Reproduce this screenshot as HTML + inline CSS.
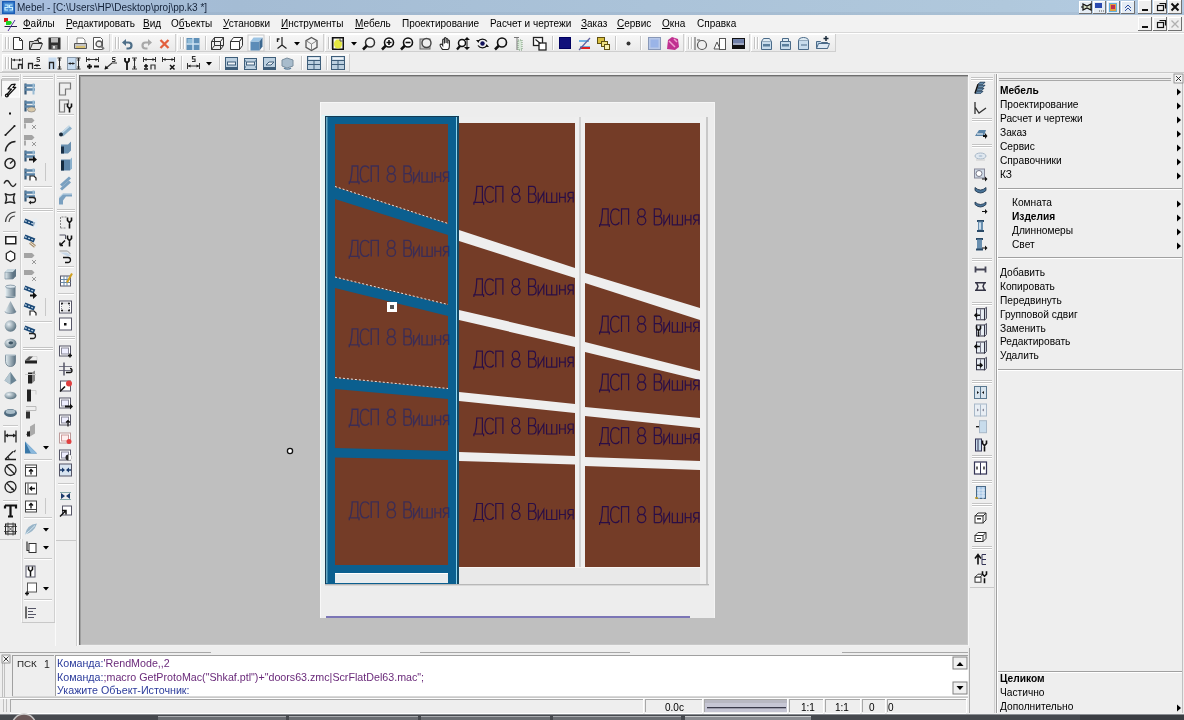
<!DOCTYPE html><html><head><meta charset="utf-8"><style>
*{box-sizing:border-box}
html,body{margin:0;padding:0}
body{width:1184px;height:720px;overflow:hidden;position:relative;background:#f0f0f0;font-family:"Liberation Sans",sans-serif;font-size:10px;color:#000}
.a{position:absolute}
.t{position:absolute;white-space:nowrap;line-height:12px;will-change:transform}
</style></head><body>
<svg class="a" style="left:0;top:0" width="1184" height="720"><defs><linearGradient id="tg" x1="0" y1="0" x2="1" y2="0"><stop offset="0" stop-color="#a8bede"/><stop offset="0.2" stop-color="#a4bcd4"/><stop offset="0.55" stop-color="#abc3d9"/><stop offset="0.85" stop-color="#b0c8dc"/><stop offset="1" stop-color="#b4cce4"/></linearGradient><linearGradient id="tbg" x1="0" y1="0" x2="0" y2="1"><stop offset="0" stop-color="#f7f7f7"/><stop offset="1" stop-color="#e9e9e9"/></linearGradient></defs><rect x="0" y="0" width="1184" height="15" fill="url(#tg)" /><rect x="0" y="12" width="1184" height="3" fill="#8a9cb0" opacity="0.18"/><rect x="0" y="15" width="1184" height="18" fill="#f2f2f2" /><rect x="0" y="32" width="1184" height="1" fill="#d8d8d8"/><rect x="0" y="33" width="1184" height="40" fill="#eeeeee" /><rect x="0" y="33" width="1184" height="1" fill="#ffffff"/><rect x="0" y="72" width="1184" height="1" fill="#c8c8c8"/><rect x="0" y="73" width="1184" height="1" fill="#f4f4f4"/><rect x="2" y="34" width="108" height="18" fill="url(#tbg)" /><rect x="2" y="34" width="108" height="1" fill="#ffffff"/><rect x="2" y="34" width="1" height="18" fill="#ffffff"/><rect x="2" y="51" width="108" height="1" fill="#cfcfcf"/><rect x="109" y="34" width="1" height="18" fill="#cfcfcf"/><rect x="5" y="37" width="1" height="12" fill="#c4c4c4"/><rect x="6" y="37" width="1" height="12" fill="#ffffff"/><rect x="8" y="37" width="1" height="12" fill="#c4c4c4"/><rect x="9" y="37" width="1" height="12" fill="#ffffff"/><rect x="112" y="34" width="64" height="18" fill="url(#tbg)" /><rect x="112" y="34" width="64" height="1" fill="#ffffff"/><rect x="112" y="34" width="1" height="18" fill="#ffffff"/><rect x="112" y="51" width="64" height="1" fill="#cfcfcf"/><rect x="175" y="34" width="1" height="18" fill="#cfcfcf"/><rect x="115" y="37" width="1" height="12" fill="#c4c4c4"/><rect x="116" y="37" width="1" height="12" fill="#ffffff"/><rect x="118" y="37" width="1" height="12" fill="#c4c4c4"/><rect x="119" y="37" width="1" height="12" fill="#ffffff"/><rect x="177" y="34" width="147" height="18" fill="url(#tbg)" /><rect x="177" y="34" width="147" height="1" fill="#ffffff"/><rect x="177" y="34" width="1" height="18" fill="#ffffff"/><rect x="177" y="51" width="147" height="1" fill="#cfcfcf"/><rect x="323" y="34" width="1" height="18" fill="#cfcfcf"/><rect x="180" y="37" width="1" height="12" fill="#c4c4c4"/><rect x="181" y="37" width="1" height="12" fill="#ffffff"/><rect x="183" y="37" width="1" height="12" fill="#c4c4c4"/><rect x="184" y="37" width="1" height="12" fill="#ffffff"/><rect x="325" y="34" width="359" height="18" fill="url(#tbg)" /><rect x="325" y="34" width="359" height="1" fill="#ffffff"/><rect x="325" y="34" width="1" height="18" fill="#ffffff"/><rect x="325" y="51" width="359" height="1" fill="#cfcfcf"/><rect x="683" y="34" width="1" height="18" fill="#cfcfcf"/><rect x="328" y="37" width="1" height="12" fill="#c4c4c4"/><rect x="329" y="37" width="1" height="12" fill="#ffffff"/><rect x="331" y="37" width="1" height="12" fill="#c4c4c4"/><rect x="332" y="37" width="1" height="12" fill="#ffffff"/><rect x="685" y="34" width="65" height="18" fill="url(#tbg)" /><rect x="685" y="34" width="65" height="1" fill="#ffffff"/><rect x="685" y="34" width="1" height="18" fill="#ffffff"/><rect x="685" y="51" width="65" height="1" fill="#cfcfcf"/><rect x="749" y="34" width="1" height="18" fill="#cfcfcf"/><rect x="688" y="37" width="1" height="12" fill="#c4c4c4"/><rect x="689" y="37" width="1" height="12" fill="#ffffff"/><rect x="691" y="37" width="1" height="12" fill="#c4c4c4"/><rect x="692" y="37" width="1" height="12" fill="#ffffff"/><rect x="751" y="34" width="85" height="18" fill="url(#tbg)" /><rect x="751" y="34" width="85" height="1" fill="#ffffff"/><rect x="751" y="34" width="1" height="18" fill="#ffffff"/><rect x="751" y="51" width="85" height="1" fill="#cfcfcf"/><rect x="835" y="34" width="1" height="18" fill="#cfcfcf"/><rect x="754" y="37" width="1" height="12" fill="#c4c4c4"/><rect x="755" y="37" width="1" height="12" fill="#ffffff"/><rect x="757" y="37" width="1" height="12" fill="#c4c4c4"/><rect x="758" y="37" width="1" height="12" fill="#ffffff"/><rect x="2" y="54" width="348" height="18" fill="url(#tbg)" /><rect x="2" y="54" width="348" height="1" fill="#ffffff"/><rect x="2" y="54" width="1" height="18" fill="#ffffff"/><rect x="2" y="71" width="348" height="1" fill="#cfcfcf"/><rect x="349" y="54" width="1" height="18" fill="#cfcfcf"/><rect x="5" y="57" width="1" height="12" fill="#c4c4c4"/><rect x="6" y="57" width="1" height="12" fill="#ffffff"/><rect x="8" y="57" width="1" height="12" fill="#c4c4c4"/><rect x="9" y="57" width="1" height="12" fill="#ffffff"/><rect x="67" y="36" width="1" height="14" fill="#c8c8c8"/><rect x="68" y="36" width="1" height="14" fill="#ffffff"/><rect x="205" y="36" width="1" height="14" fill="#c8c8c8"/><rect x="206" y="36" width="1" height="14" fill="#ffffff"/><rect x="269" y="36" width="1" height="14" fill="#c8c8c8"/><rect x="270" y="36" width="1" height="14" fill="#ffffff"/><rect x="552" y="36" width="1" height="14" fill="#c8c8c8"/><rect x="553" y="36" width="1" height="14" fill="#ffffff"/><rect x="615" y="36" width="1" height="14" fill="#c8c8c8"/><rect x="616" y="36" width="1" height="14" fill="#ffffff"/><rect x="640" y="36" width="1" height="14" fill="#c8c8c8"/><rect x="641" y="36" width="1" height="14" fill="#ffffff"/><rect x="181" y="56" width="1" height="14" fill="#c8c8c8"/><rect x="182" y="56" width="1" height="14" fill="#ffffff"/><rect x="219" y="56" width="1" height="14" fill="#c8c8c8"/><rect x="220" y="56" width="1" height="14" fill="#ffffff"/><rect x="301" y="56" width="1" height="14" fill="#c8c8c8"/><rect x="302" y="56" width="1" height="14" fill="#ffffff"/><rect x="326" y="56" width="1" height="14" fill="#c8c8c8"/><rect x="327" y="56" width="1" height="14" fill="#ffffff"/><rect x="0" y="74" width="78" height="574" fill="#eeeeee" /><rect x="20" y="74" width="1" height="465" fill="#d0d0d0"/><rect x="21" y="74" width="1" height="548" fill="#fafafa"/><rect x="22" y="539" width="1" height="83" fill="#d8d8d8"/><rect x="54" y="74" width="1" height="548" fill="#d0d0d0"/><rect x="55" y="74" width="1" height="574" fill="#fafafa"/><rect x="76" y="74" width="1" height="574" fill="#d0d0d0"/><rect x="77" y="74" width="1" height="574" fill="#fafafa"/><rect x="0" y="647" width="78" height="1" fill="#d0d0d0"/><rect x="2" y="76" width="17" height="1" fill="#c4c4c4"/><rect x="2" y="77" width="17" height="1" fill="#ffffff"/><rect x="2" y="78" width="17" height="1" fill="#c4c4c4"/><rect x="2" y="79" width="17" height="1" fill="#ffffff"/><rect x="23" y="76" width="30" height="1" fill="#c4c4c4"/><rect x="23" y="77" width="30" height="1" fill="#ffffff"/><rect x="23" y="78" width="30" height="1" fill="#c4c4c4"/><rect x="23" y="79" width="30" height="1" fill="#ffffff"/><rect x="57" y="76" width="18" height="1" fill="#c4c4c4"/><rect x="57" y="77" width="18" height="1" fill="#ffffff"/><rect x="57" y="78" width="18" height="1" fill="#c4c4c4"/><rect x="57" y="79" width="18" height="1" fill="#ffffff"/><rect x="3" y="231" width="15" height="1" fill="#c8c8c8"/><rect x="3" y="232" width="15" height="1" fill="#ffffff"/><rect x="3" y="425" width="15" height="1" fill="#c8c8c8"/><rect x="3" y="426" width="15" height="1" fill="#ffffff"/><rect x="3" y="500" width="15" height="1" fill="#c8c8c8"/><rect x="3" y="501" width="15" height="1" fill="#ffffff"/><rect x="0" y="539" width="20" height="1" fill="#c8c8c8"/><rect x="24" y="186" width="28" height="1" fill="#c8c8c8"/><rect x="24" y="187" width="28" height="1" fill="#ffffff"/><rect x="24" y="321" width="28" height="1" fill="#c8c8c8"/><rect x="24" y="322" width="28" height="1" fill="#ffffff"/><rect x="24" y="459" width="28" height="1" fill="#c8c8c8"/><rect x="24" y="460" width="28" height="1" fill="#ffffff"/><rect x="24" y="517" width="28" height="1" fill="#c8c8c8"/><rect x="24" y="518" width="28" height="1" fill="#ffffff"/><rect x="24" y="558" width="28" height="1" fill="#c8c8c8"/><rect x="24" y="559" width="28" height="1" fill="#ffffff"/><rect x="24" y="599" width="28" height="1" fill="#c8c8c8"/><rect x="24" y="600" width="28" height="1" fill="#ffffff"/><rect x="23" y="208" width="30" height="1" fill="#c4c4c4"/><rect x="23" y="209" width="30" height="1" fill="#ffffff"/><rect x="23" y="210" width="30" height="1" fill="#c4c4c4"/><rect x="23" y="211" width="30" height="1" fill="#ffffff"/><rect x="23" y="347" width="30" height="1" fill="#c4c4c4"/><rect x="23" y="348" width="30" height="1" fill="#ffffff"/><rect x="23" y="349" width="30" height="1" fill="#c4c4c4"/><rect x="23" y="350" width="30" height="1" fill="#ffffff"/><rect x="22" y="622" width="33" height="1" fill="#c8c8c8"/><rect x="58" y="114" width="16" height="1" fill="#c8c8c8"/><rect x="58" y="115" width="16" height="1" fill="#ffffff"/><rect x="58" y="266" width="16" height="1" fill="#c8c8c8"/><rect x="58" y="267" width="16" height="1" fill="#ffffff"/><rect x="58" y="293" width="16" height="1" fill="#c8c8c8"/><rect x="58" y="294" width="16" height="1" fill="#ffffff"/><rect x="58" y="483" width="16" height="1" fill="#c8c8c8"/><rect x="58" y="484" width="16" height="1" fill="#ffffff"/><rect x="57" y="209" width="18" height="1" fill="#c4c4c4"/><rect x="57" y="210" width="18" height="1" fill="#ffffff"/><rect x="57" y="211" width="18" height="1" fill="#c4c4c4"/><rect x="57" y="212" width="18" height="1" fill="#ffffff"/><rect x="57" y="336" width="18" height="1" fill="#c4c4c4"/><rect x="57" y="337" width="18" height="1" fill="#ffffff"/><rect x="57" y="338" width="18" height="1" fill="#c4c4c4"/><rect x="57" y="339" width="18" height="1" fill="#ffffff"/><rect x="56" y="540" width="20" height="1" fill="#c8c8c8"/><rect x="79" y="75" width="889" height="570" fill="#6e6e6e" /><rect x="80" y="76" width="888" height="569" fill="#a0a0a0" /><rect x="81" y="77" width="887" height="568" fill="#bfbfbf" /><rect x="967" y="77" width="1" height="568" fill="#c8c8c8"/><rect x="81" y="644" width="887" height="1" fill="#c8c8c8"/><rect x="968" y="74" width="28" height="639" fill="#eeeeee" /><rect x="968" y="74" width="1" height="572" fill="#f8f8f8"/><rect x="971" y="77" width="22" height="1" fill="#c4c4c4"/><rect x="971" y="78" width="22" height="1" fill="#ffffff"/><rect x="971" y="79" width="22" height="1" fill="#c4c4c4"/><rect x="971" y="80" width="22" height="1" fill="#ffffff"/><rect x="972" y="118" width="20" height="1" fill="#c4c4c4"/><rect x="972" y="119" width="20" height="1" fill="#ffffff"/><rect x="972" y="120" width="20" height="1" fill="#c4c4c4"/><rect x="972" y="121" width="20" height="1" fill="#ffffff"/><rect x="972" y="144" width="20" height="1" fill="#c4c4c4"/><rect x="972" y="145" width="20" height="1" fill="#ffffff"/><rect x="972" y="146" width="20" height="1" fill="#c4c4c4"/><rect x="972" y="147" width="20" height="1" fill="#ffffff"/><rect x="972" y="258" width="20" height="1" fill="#c4c4c4"/><rect x="972" y="259" width="20" height="1" fill="#ffffff"/><rect x="972" y="260" width="20" height="1" fill="#c4c4c4"/><rect x="972" y="261" width="20" height="1" fill="#ffffff"/><rect x="972" y="302" width="20" height="1" fill="#c4c4c4"/><rect x="972" y="303" width="20" height="1" fill="#ffffff"/><rect x="972" y="304" width="20" height="1" fill="#c4c4c4"/><rect x="972" y="305" width="20" height="1" fill="#ffffff"/><rect x="972" y="380" width="20" height="1" fill="#c4c4c4"/><rect x="972" y="381" width="20" height="1" fill="#ffffff"/><rect x="972" y="382" width="20" height="1" fill="#c4c4c4"/><rect x="972" y="383" width="20" height="1" fill="#ffffff"/><rect x="972" y="455" width="20" height="1" fill="#c4c4c4"/><rect x="972" y="456" width="20" height="1" fill="#ffffff"/><rect x="972" y="457" width="20" height="1" fill="#c4c4c4"/><rect x="972" y="458" width="20" height="1" fill="#ffffff"/><rect x="972" y="480" width="20" height="1" fill="#c4c4c4"/><rect x="972" y="481" width="20" height="1" fill="#ffffff"/><rect x="972" y="482" width="20" height="1" fill="#c4c4c4"/><rect x="972" y="483" width="20" height="1" fill="#ffffff"/><rect x="972" y="503" width="20" height="1" fill="#c4c4c4"/><rect x="972" y="504" width="20" height="1" fill="#ffffff"/><rect x="972" y="505" width="20" height="1" fill="#c4c4c4"/><rect x="972" y="506" width="20" height="1" fill="#ffffff"/><rect x="972" y="546" width="20" height="1" fill="#c4c4c4"/><rect x="972" y="547" width="20" height="1" fill="#ffffff"/><rect x="972" y="548" width="20" height="1" fill="#c4c4c4"/><rect x="972" y="549" width="20" height="1" fill="#ffffff"/><rect x="970" y="587" width="24" height="1" fill="#c8c8c8"/><rect x="994" y="74" width="1" height="639" fill="#d0d0d0"/><rect x="996" y="74" width="188" height="639" fill="#eeeeee" /><rect x="996" y="74" width="1" height="639" fill="#a0a0a0"/><rect x="997" y="74" width="1" height="639" fill="#ffffff"/><rect x="999" y="78" width="172" height="1" fill="#a8a8a8"/><rect x="999" y="80" width="172" height="1" fill="#a8a8a8"/><rect x="998" y="188" width="184" height="1" fill="#a0a0a0"/><rect x="998" y="189" width="184" height="1" fill="#ffffff"/><rect x="998" y="257" width="184" height="1" fill="#a0a0a0"/><rect x="998" y="258" width="184" height="1" fill="#ffffff"/><rect x="998" y="369" width="184" height="1" fill="#a0a0a0"/><rect x="998" y="370" width="184" height="1" fill="#ffffff"/><rect x="998" y="671" width="184" height="1" fill="#a0a0a0"/><rect x="998" y="672" width="184" height="1" fill="#ffffff"/><rect x="1182" y="74" width="1" height="639" fill="#c0c0c0"/><rect x="0" y="646" width="968" height="68" fill="#eeeeee" /><rect x="0" y="652" width="211" height="1" fill="#a8a8a8"/><rect x="420" y="652" width="210" height="1" fill="#a8a8a8"/><rect x="842" y="652" width="126" height="1" fill="#a8a8a8"/><rect x="969" y="648" width="1" height="65" fill="#a8a8a8"/><rect x="2" y="655" width="1" height="42" fill="#c0c0c0"/><rect x="4" y="655" width="1" height="42" fill="#c0c0c0"/><rect x="12" y="655" width="42" height="41" fill="#eeeeee" /><rect x="12" y="655" width="42" height="1" fill="#a0a0a0"/><rect x="12" y="655" width="1" height="41" fill="#a0a0a0"/><rect x="55" y="655" width="913" height="41" fill="#ffffff" /><rect x="55" y="655" width="913" height="1" fill="#a0a0a0"/><rect x="55" y="655" width="1" height="41" fill="#a0a0a0"/><rect x="12" y="696" width="956" height="1" fill="#d8d8d8"/><rect x="953" y="657" width="14" height="12" fill="#f0f0f0" stroke="#808080" stroke-width="1"/><rect x="953" y="682" width="14" height="12" fill="#f0f0f0" stroke="#808080" stroke-width="1"/><polygon points="956.5,666 963.5,666 960,662" fill="#000"/><polygon points="956.5,686 963.5,686 960,690" fill="#000"/><rect x="0" y="697" width="968" height="1" fill="#c8c8c8"/><rect x="0" y="698" width="968" height="1" fill="#ffffff"/><rect x="3" y="699" width="1" height="13" fill="#c0c0c0"/><rect x="6" y="699" width="1" height="13" fill="#c0c0c0"/><rect x="10" y="699" width="633" height="1" fill="#a8a8a8"/><rect x="10" y="699" width="1" height="13" fill="#a8a8a8"/><rect x="10" y="713" width="633" height="1" fill="#ffffff"/><rect x="643" y="699" width="1" height="14" fill="#ffffff"/><rect x="645" y="699" width="57" height="1" fill="#a8a8a8"/><rect x="645" y="699" width="1" height="13" fill="#a8a8a8"/><rect x="645" y="713" width="57" height="1" fill="#ffffff"/><rect x="702" y="699" width="1" height="14" fill="#ffffff"/><rect x="704" y="699" width="83" height="1" fill="#a8a8a8"/><rect x="704" y="699" width="1" height="13" fill="#a8a8a8"/><rect x="704" y="713" width="83" height="1" fill="#ffffff"/><rect x="787" y="699" width="1" height="14" fill="#ffffff"/><rect x="789" y="699" width="34" height="1" fill="#a8a8a8"/><rect x="789" y="699" width="1" height="13" fill="#a8a8a8"/><rect x="789" y="713" width="34" height="1" fill="#ffffff"/><rect x="823" y="699" width="1" height="14" fill="#ffffff"/><rect x="825" y="699" width="35" height="1" fill="#a8a8a8"/><rect x="825" y="699" width="1" height="13" fill="#a8a8a8"/><rect x="825" y="713" width="35" height="1" fill="#ffffff"/><rect x="860" y="699" width="1" height="14" fill="#ffffff"/><rect x="862" y="699" width="23" height="1" fill="#a8a8a8"/><rect x="862" y="699" width="1" height="13" fill="#a8a8a8"/><rect x="862" y="713" width="23" height="1" fill="#ffffff"/><rect x="885" y="699" width="1" height="14" fill="#ffffff"/><rect x="887" y="699" width="79" height="1" fill="#a8a8a8"/><rect x="887" y="699" width="1" height="13" fill="#a8a8a8"/><rect x="887" y="713" width="79" height="1" fill="#ffffff"/><rect x="966" y="699" width="1" height="14" fill="#ffffff"/><rect x="705" y="700" width="82" height="12" fill="#c6c6d4" /><rect x="705" y="700" width="82" height="3" fill="#b8b8c2" /><rect x="707" y="707" width="79" height="1.3" fill="#3a3a4a" /><rect x="0" y="714" width="1184" height="6" fill="#46494e" /><rect x="0" y="714" width="1184" height="1" fill="#8a8d92"/><circle cx="24" cy="726" r="12" fill="#6a5858" stroke="#c8c8c8" stroke-width="1.5"/><rect x="158" y="716" width="128" height="4" fill="#6a6d72" /><rect x="158" y="716" width="128" height="1" fill="#a8aaae"/><rect x="289" y="716" width="129" height="4" fill="#6a6d72" /><rect x="289" y="716" width="129" height="1" fill="#a8aaae"/><rect x="421" y="716" width="129" height="4" fill="#6a6d72" /><rect x="421" y="716" width="129" height="1" fill="#a8aaae"/><rect x="553" y="716" width="128" height="4" fill="#6a6d72" /><rect x="553" y="716" width="128" height="1" fill="#a8aaae"/><rect x="685" y="716" width="126" height="4" fill="#8a8d92" /><rect x="685" y="716" width="126" height="1" fill="#c8cacc"/><rect x="1080" y="715" width="104" height="5" fill="#3a3d42" /><rect x="2" y="655" width="8" height="8" fill="#f4f4f4" stroke="#808080" stroke-width=".8"/><path d="M3.5 656.5l5 5M8.5 656.5l-5 5" stroke="#222" stroke-width=".9"/><rect x="1174" y="74" width="9" height="9" fill="#f4f4f4" stroke="#808080" stroke-width=".8"/><path d="M1176 76l5 5M1181 76l-5 5" stroke="#222" stroke-width=".9"/></svg>
<svg class="a" style="left:0;top:0" width="1184" height="720" viewBox="0 0 1184 720">
<defs><path id="dsp" d="M0.3 2.3V0H10V2.3M1 0C2.5-4 3-10 3.2-16H8.8V0M20 -13.5C19.3 -15.3 18 -16 16 -16C12.8 -16 11.3 -13 11.3 -8C11.3 -3 12.8 0 16 0C18 0 19.3 -0.7 20 -2.5M22.2 0V-16H29.3V0M45.9 -12A3.6 4 0 1 0 38.7 -12A3.6 4 0 1 0 45.9 -12ZM46.5 -4.2A4.2 4.2 0 1 0 38.1 -4.2A4.2 4.2 0 1 0 46.5 -4.2ZM55 0V-16H59C61 -16 62 -14.8 62 -12.2C62 -9.8 61 -8.4 59 -8.4H55M59 -8.4C61.5 -8.4 62.6 -6.8 62.6 -4.2C62.6 -1.5 61.5 0 59 0H55M64.6 -10V0L70.2 -10V0M73 -10V0H83.2V-10M78.1 -10V0M86 -10V0M91.6 -10V0M86 -5H91.6M99.6 0V-10H96.6C94.9 -10 94.3 -9 94.3 -7.3C94.3 -5.6 94.9 -4.6 96.6 -4.6H99.6M96.8 -4.6L94 0" fill="none"/></defs>
<rect x="320" y="102" width="395" height="516" fill="#ededed" />
<rect x="320" y="102" width="395" height="1" fill="#f6f6f6" />
<rect x="320" y="102" width="1" height="516" fill="#f8f8f8" />
<rect x="714" y="102" width="1" height="516" fill="#f4f4f4" />
<rect x="322" y="115" width="137" height="1" fill="#d8f4fa" />
<rect x="321" y="116" width="4" height="468" fill="#e8f4f4" />
<rect x="325" y="116" width="134" height="468" fill="#0b5f8f" />
<rect x="325" y="116" width="134" height="1" fill="#163a52" />
<rect x="325" y="116" width="1" height="468" fill="#163a52" />
<rect x="326" y="117" width="1.5" height="466" fill="#6aaac4" />
<rect x="456" y="117" width="1" height="467" fill="#8ad4f0" />
<rect x="457" y="117" width="2" height="467" fill="#134a66" />
<rect x="335" y="124" width="113" height="441" fill="#743c27" />
<rect x="335" y="573" width="113" height="10" fill="#e8ecee" />
<rect x="335" y="573" width="113" height="1" fill="#ffffff" />
<rect x="459" y="123" width="116" height="444" fill="#743c27" />
<rect x="585" y="123" width="115" height="444" fill="#743c27" />
<rect x="459" y="117" width="249" height="6" fill="#eeeeee" />
<rect x="575" y="117" width="10" height="468" fill="#efefef" />
<rect x="579" y="117" width="2" height="468" fill="#d2d2d2" />
<rect x="700" y="117" width="8" height="468" fill="#efefef" />
<rect x="706" y="117" width="2" height="468" fill="#c8c8c8" />
<rect x="459" y="567" width="241" height="17" fill="#e9e9e9" />
<rect x="459" y="567" width="241" height="1" fill="#f8f4f2" />
<rect x="325" y="584" width="384" height="1" fill="#b8b8b8" />
<rect x="325" y="585" width="384" height="1" fill="#d8d8d8" />
<rect x="326" y="616" width="364" height="2" fill="#7c76b6" />
<polygon points="459,230 575,268 575,278 459,241" fill="#eeeeee"/>
<polygon points="459,310 575,337 575,347 459,320" fill="#eeeeee"/>
<polygon points="459,392 575,404 575,413 459,401" fill="#eeeeee"/>
<polygon points="459,452 575,456 575,464.5 459,461" fill="#eeeeee"/>
<polygon points="585,273 700,308 700,320 585,283" fill="#eeeeee"/>
<polygon points="585,342 700,371 700,380 585,352" fill="#eeeeee"/>
<polygon points="585,407 700,418 700,428 585,416" fill="#eeeeee"/>
<polygon points="585,457 700,461 700,470 585,466" fill="#eeeeee"/>
<polygon points="335,187 448,224 448,235 335,199" fill="#0b5f8f"/>
<polygon points="335,277.5 448,305 448,316 335,288" fill="#0b5f8f"/>
<polygon points="335,378 448,389 448,399 335,389" fill="#0b5f8f"/>
<polygon points="335,448 448,451 448,460 335,457.5" fill="#0b5f8f"/>
<line x1="335" y1="186.5" x2="448" y2="223.5" stroke="#fff" stroke-width="1" stroke-dasharray="2,2" opacity="0.85"/>
<line x1="335" y1="277.0" x2="448" y2="304.5" stroke="#fff" stroke-width="1" stroke-dasharray="2,2" opacity="0.85"/>
<line x1="335" y1="377.5" x2="448" y2="388.5" stroke="#fff" stroke-width="1" stroke-dasharray="2,2" opacity="0.85"/>
<use href="#dsp" x="349" y="182" stroke="#1a2470" stroke-width="1.4" opacity="0.62"/>
<use href="#dsp" x="349" y="256.4" stroke="#1a2470" stroke-width="1.4" opacity="0.62"/>
<use href="#dsp" x="349" y="344.9" stroke="#1a2470" stroke-width="1.4" opacity="0.62"/>
<use href="#dsp" x="349" y="425.2" stroke="#1a2470" stroke-width="1.4" opacity="0.62"/>
<use href="#dsp" x="349" y="517.9" stroke="#1a2470" stroke-width="1.4" opacity="0.62"/>
<use href="#dsp" x="473.6" y="202.4" stroke="#2a0e46" stroke-width="1.2"/>
<use href="#dsp" x="473.6" y="294.8" stroke="#2a0e46" stroke-width="1.2"/>
<use href="#dsp" x="473.6" y="367.2" stroke="#2a0e46" stroke-width="1.2"/>
<use href="#dsp" x="473.6" y="434" stroke="#2a0e46" stroke-width="1.2"/>
<use href="#dsp" x="473.6" y="519.5" stroke="#2a0e46" stroke-width="1.2"/>
<use href="#dsp" x="599.3" y="224.8" stroke="#2a0e46" stroke-width="1.2"/>
<use href="#dsp" x="599.3" y="332.1" stroke="#2a0e46" stroke-width="1.2"/>
<use href="#dsp" x="599.3" y="390.2" stroke="#2a0e46" stroke-width="1.2"/>
<use href="#dsp" x="599.3" y="443.7" stroke="#2a0e46" stroke-width="1.2"/>
<use href="#dsp" x="599.3" y="522.7" stroke="#2a0e46" stroke-width="1.2"/>
<rect x="387" y="302" width="10" height="10" fill="#fff" />
<rect x="390" y="305" width="4" height="4" fill="#555" />
<circle cx="290" cy="451" r="2.6" fill="#fff" stroke="#111" stroke-width="1.3"/>
</svg>
<svg class="a" style="left:0;top:0" width="1184" height="720"><defs><linearGradient id="g3d" x1="0" y1="0" x2="1" y2="0"><stop offset="0" stop-color="#e4eef2"/><stop offset="1" stop-color="#5c7282"/></linearGradient><radialGradient id="r3d" cx="0.35" cy="0.35" r="0.7"><stop offset="0" stop-color="#e8f0f4"/><stop offset="1" stop-color="#58707e"/></radialGradient></defs><rect x="248" y="35" width="16" height="16" fill="#fafafa" stroke="#c8c8c8"/><g transform="translate(250,37)"><path d="M.5 4.5h9v9h-9z" fill="#5c8cb8"/><path d="M.5 4.5l3-4h9l-3 4z" fill="#9cc4e4"/><path d="M9.5 4.5l3-4v9l-3 4z" fill="#3c6890"/></g><g transform="translate(11,37)"><path d="M2.5 .5h6l3 3v9h-9z" fill="#fff" stroke="#333"/><path d="M8.5 .5v3h3" fill="none" stroke="#333"/></g><g transform="translate(29,37)"><path d="M.5 4.5h4l1-1h4v2h3l-2.5 7h-9.5z" fill="#c8c8c8" stroke="#333"/><path d="M1 12.5l2.5-6h10l-2.5 6z" fill="#e8e8e8" stroke="#333"/><path d="M8 3q2-3 4-1" fill="none" stroke="#333" stroke-width="1.5"/></g><g transform="translate(48,37)"><rect x=".5" y=".5" width="12" height="12" fill="#2e2e2e"/><rect x="3" y="1" width="7" height="4.5" fill="#bcbcbc"/><rect x="3.5" y="8" width="6" height="4.5" fill="#777"/><rect x="5" y="9" width="2" height="2.5" fill="#ddd"/></g><g transform="translate(74,37)"><path d="M3 1h6l2 2v4h-8z" fill="#fff" stroke="#888"/><path d="M.5 6.5h12v5h-12z" fill="#c4c4c4" stroke="#555"/><rect x="2" y="9" width="9" height="2" fill="#d8c070"/></g><g transform="translate(92,37)"><path d="M1.5 .5h7l2 2v10h-9z" fill="#fff" stroke="#555"/><circle cx="7" cy="7" r="3" fill="#eee" stroke="#555" stroke-width="1.3"/><path d="M9 9l3 3" stroke="#777" stroke-width="2"/></g><g transform="translate(121,37)"><path d="M3.5 5.5h4a3 3 0 0 1 0 6h-2" fill="none" stroke="#4d6e88" stroke-width="2.2"/><path d="M1 5.5l4-3.5v7z" fill="#4d6e88"/></g><g transform="translate(140,37)"><path d="M9.5 5.5h-4a3 3 0 0 0 0 6h2" fill="none" stroke="#a8a8a8" stroke-width="2.2"/><path d="M12 5.5l-4-3.5v7z" fill="#a8a8a8"/></g><g transform="translate(158,37)"><path d="M2.5 3l8 8M10.5 3l-8 8" stroke="#e2603e" stroke-width="2.3"/></g><g transform="translate(186,37)"><rect x=".5" y="1" width="13" height="12" fill="#5f90b8"/><path d="M.5 7h13M7 1v12" stroke="#cfe4f4" stroke-width="1.5"/><rect x="1.5" y="2" width="4.5" height="4" fill="#8fbbd8"/></g><g transform="translate(211,37)"><path d="M.5 4.5h9v8h-9zM.5 4.5l3-4h9l-3 4M12.5 .5v8l-3 4M3.5 .5v8h9M3.5 8.5l-3 4" fill="none" stroke="#333"/></g><g transform="translate(230,37)"><path d="M.5 4.5h9v8h-9z" fill="#fff" stroke="#333"/><path d="M.5 4.5l3-4h9l-3 4z" fill="#fff" stroke="#333"/><path d="M9.5 4.5l3-4v8l-3 4z" fill="#f4f4f4" stroke="#333"/></g><g transform="translate(276,37)"><path d="M6 0v8M6 8l-4.5 3.5M6 8l4.5 3.5" stroke="#222" stroke-width="1.2" fill="none"/><path d="M1.5 5V2h2" stroke="#222" stroke-width="1.4" fill="none"/></g><g transform="translate(305,37)"><path d="M6.5 .5l5.5 3.2v6.6l-5.5 3.2-5.5-3.2v-6.6z" fill="#f2f2f2" stroke="#555" stroke-width="1.3"/><path d="M1.5 4l5 3 5-3M6.5 7v6" fill="none" stroke="#888"/></g><g transform="translate(332,37)"><rect x=".75" y=".75" width="10.5" height="11.5" fill="#f8f8f0" stroke="#111" stroke-width="1.5"/><ellipse cx="6" cy="7" rx="4" ry="4.5" fill="#e4e840"/><path d="M8 1v3h3" fill="none" stroke="#555"/></g><g transform="translate(362,37)"><circle cx="8" cy="5.5" r="4.5" fill="#f4f4f4" stroke="#333" stroke-width="1.5"/><path d="M5 8.5l-4 4" stroke="#111" stroke-width="2.5"/></g><g transform="translate(381,37)"><circle cx="8" cy="5.5" r="4.5" fill="#fff" stroke="#111" stroke-width="1.6"/><path d="M8 3v5M5.5 5.5h5" stroke="#111" stroke-width="1.6"/><path d="M5 8.5l-4 4" stroke="#111" stroke-width="2.5"/></g><g transform="translate(400,37)"><circle cx="8" cy="5.5" r="4.5" fill="#fff" stroke="#111" stroke-width="1.6"/><path d="M5.5 5.5h5" stroke="#111" stroke-width="1.6"/><path d="M5 8.5l-4 4" stroke="#111" stroke-width="2.5"/></g><g transform="translate(419,37)"><rect x="1" y="2" width="10" height="10" fill="#ccc" stroke="#666"/><circle cx="7.5" cy="6" r="4.5" fill="#eee" stroke="#444" stroke-width="1.4"/></g><g transform="translate(439,37)"><path d="M3.5 12.5c-1.5-2-3.2-4-2.2-5 .8-.8 1.8 0 2.4 1V3c0-1.3 1.7-1.3 1.7 0v3.5V1.5c0-1.3 1.7-1.3 1.7 0V6V2.5c0-1.3 1.7-1.3 1.7 0V6.5V4c0-1.3 1.6-1.3 1.6 0v4.5c0 2.5-1 4-2 4z" fill="#fff" stroke="#222" stroke-width="1.1"/></g><g transform="translate(457,37)"><circle cx="5" cy="6" r="3.5" fill="#fff" stroke="#111" stroke-width="1.5"/><path d="M3 9l-3 3.5" stroke="#111" stroke-width="2.3"/><path d="M10 0l3 3h-6zM10 13l3-3h-6z" fill="#111"/><path d="M10 3v7" stroke="#111"/></g><g transform="translate(476,37)"><circle cx="6.5" cy="6.5" r="2.2" fill="#10105a"/><path d="M2 4.5A5.5 5.5 0 0 1 11 4.5M11 8.5A5.5 5.5 0 0 1 2 8.5" fill="none" stroke="#111" stroke-width="1.3"/><path d="M0 3h3.5l-1 3zM13 10h-3.5l1-3z" fill="#111"/></g><g transform="translate(494,37)"><circle cx="8" cy="5.5" r="4.5" fill="none" stroke="#111" stroke-width="1.6"/><path d="M5 8.5l-4 4" stroke="#111" stroke-width="2.5"/></g><g transform="translate(514,37)"><path d="M0 .5h5M3 1v12" stroke="#777"/><rect x="4" y="3" width="4" height="10" fill="#d8e8d8" stroke="#789878" stroke-dasharray="1,1"/></g><g transform="translate(533,37)"><rect x=".5" y=".5" width="9" height="8" fill="#fff" stroke="#222" stroke-width="1.3"/><rect x="6" y="6" width="7" height="7" fill="#fff" stroke="#222" stroke-width="1.3"/><path d="M2.5 2.5l5 4" stroke="#222" stroke-width="1.3"/></g><g transform="translate(559,37)"><rect x=".5" y=".5" width="11" height="11" fill="#10107a" stroke="#000060"/></g><g transform="translate(578,37)"><path d="M1 4h10M2 10h10" stroke="#4aa0e0" stroke-width="1.5"/><path d="M2 11h10" stroke="#e02020" stroke-width="2"/><path d="M1 13l11-12" stroke="#6060a0" stroke-width="1.2"/></g><g transform="translate(597,37)"><rect x=".5" y=".5" width="7" height="6" fill="#d8c040" stroke="#605010"/><rect x="4.5" y="4.5" width="6" height="5" fill="#f0e080" stroke="#605010"/><rect x="7.5" y="7.5" width="5" height="5" fill="#f8f0b0" stroke="#605010"/></g><g transform="translate(626,41)"><circle cx="2.5" cy="2.5" r="2" fill="#333"/></g><g transform="translate(648,37)"><rect x=".5" y=".5" width="12" height="12" fill="#b8c8e8" stroke="#8898b8"/><rect x="2.5" y="2.5" width="8" height="8" fill="#9ab4e8"/></g><g transform="translate(666,37)"><path d="M1 12l1-9 4-3 6 2 1 8-4 3z" fill="#c03090"/><path d="M3 4l6 6M8 2l3 3" stroke="#f0a0d0" stroke-width="1.5"/></g><g transform="translate(694,37)"><path d="M1 0v13" stroke="#555"/><circle cx="8" cy="8" r="4.5" fill="#f0f0f0" stroke="#555" stroke-width="1.2"/><path d="M3 3h3" stroke="#555"/></g><g transform="translate(713,37)"><path d="M1 12l3-7 3 7z" fill="#fff" stroke="#555"/><rect x="6.5" y="1.5" width="6" height="11" fill="#fff" stroke="#555"/></g><g transform="translate(732,37)"><rect x="0" y="1" width="13" height="11" fill="#111"/><rect x="1" y="2" width="11" height="6" fill="#7080a8"/><rect x="1" y="6" width="11" height="2" fill="#a0a8c0"/></g><g transform="translate(760,37)"><path d="M1.5 4.5h10v8h-10z" fill="#c8dcec" stroke="#4a6a88"/><path d="M1.5 4.5l2-3h6l2 3" fill="#e0ecf4" stroke="#4a6a88"/><rect x="3" y="7" width="7" height="2.5" fill="#5a7e9c"/></g><g transform="translate(779,37)"><path d="M1.5 4.5h10v8h-10z" fill="#c8dcec" stroke="#4a6a88"/><path d="M3.5 1.5h6v3h-6z" fill="#e0ecf4" stroke="#4a6a88"/><rect x="3" y="7" width="7" height="2.5" fill="#5a7e9c"/></g><g transform="translate(797,37)"><path d="M1.5 3.5h10v9h-10z" fill="#c8dcec" stroke="#4a6a88"/><path d="M1.5 3.5a5 3 0 0 1 10 0" fill="#e0ecf4" stroke="#4a6a88"/><path d="M4 8h6" stroke="#4a6a88"/></g><g transform="translate(816,36)"><path d="M.5 5.5h4l1 1h6v6h-11z" fill="#bcd4e8" stroke="#4a6a88"/><path d="M.5 12.5l2-5h11l-2 5z" fill="#dce8f4" stroke="#4a6a88"/><path d="M10 0v5M7.5 2.5h5" stroke="#1a2a3a" stroke-width="1.5"/></g><polygon points="294,42 300,42 297,45.5" fill="#000"/><polygon points="351,42 357,42 354,45.5" fill="#000"/><g transform="translate(11,57)"><path d="M.5 1v11h6M.5 3h11M11.5 1v11" fill="none" stroke="#444"/><path d="M2 3l2-1.5v3zM10 3l-2-1.5v3z" fill="#222"/><path d="M7.5 12V7.5h3.5V12" fill="none" stroke="#222" stroke-width="1.3"/></g><g transform="translate(28,57)"><path d="M.5 12V6.5h4V12" fill="none" stroke="#222" stroke-width="1.3"/><path d="M12 .5h-3v2h2.5v2h-3" fill="none" stroke="#444"/><path d="M6 11.5h7" stroke="#444"/><path d="M6 8.5h6" stroke="#222"/><path d="M9 10l-2-2.5h4z" fill="#111"/></g><g transform="translate(48,57)"><rect x=".5" y=".5" width="8" height="12" fill="#c8dcf0"/><path d="M1.5 12V5.5h4V12" fill="none" stroke="#222" stroke-width="1.3"/><path d="M9.5 1h4M9.5 12h4M11.5 1v11" stroke="#222"/><path d="M11.5 1l-1.5 2.5h3zM11.5 12l-1.5-2.5h3z" fill="#222"/></g><g transform="translate(67,57)"><rect x=".5" y=".5" width="8.5" height="12" fill="#c8dcf0" stroke="#8898a8"/><path d="M1.5 6.5h6" stroke="#222"/><path d="M1.5 6.5l2-1.5v3zM7.5 6.5l-2-1.5v3z" fill="#222"/><path d="M9.5 1h4M9.5 12h4M11.5 1v11" stroke="#222"/><path d="M11.5 1l-1.5 2.5h3zM11.5 12l-1.5-2.5h3z" fill="#222"/></g><g transform="translate(86,57)"><path d="M.5 0v5M12.5 0v5M.5 2.5h12" stroke="#333"/><path d="M1 2.5l2.5-1.5v3zM12 2.5l-2.5-1.5v3z" fill="#222"/><path d="M1 9.5h5M3.5 7v5M8 9.5h5" stroke="#111" stroke-width="1.8"/></g><g transform="translate(104,57)"><path d="M1 12l7-6h5" fill="none" stroke="#333" stroke-width="1.2"/><path d="M.5 12.5l1-4 3 3z" fill="#111"/><path d="M11.5 .5h-3v2h2.5v2h-3" fill="none" stroke="#333"/></g><g transform="translate(124,57)"><path d="M3 13V6M1 1v3l2 2 2-2V1" fill="none" stroke="#111" stroke-width="1.8"/><path d="M8 1h5M8 12h5M10.5 1v11" stroke="#333"/><path d="M10.5 1l-1.5 2.5h3zM10.5 12l-1.5-2.5h3z" fill="#222"/></g><g transform="translate(143,57)"><path d="M.5 0v5M12.5 0v5M.5 2.5h12" stroke="#333"/><path d="M1 2.5l2.5-1.5v3zM12 2.5l-2.5-1.5v3z" fill="#222"/><path d="M1 9h4M3 7v4M1 12h4" stroke="#111" stroke-width="1.5"/><path d="M8 12.5V8h4v4.5" fill="none" stroke="#333" stroke-width="1.2"/></g><g transform="translate(162,57)"><path d="M.5 0v5M12.5 0v5M.5 2.5h12" stroke="#333"/><path d="M1 2.5l2.5-1.5v3zM12 2.5l-2.5-1.5v3z" fill="#222"/><path d="M8 8l4.5 4.5M12.5 8L8 12.5" stroke="#111" stroke-width="1.5"/></g><g transform="translate(187,56)"><path d="M8.5 .5h-3v2.5h2.5v2.5h-3" fill="none" stroke="#333" stroke-width="1.2"/><path d="M.5 7v6M12.5 7v6M.5 10h12" stroke="#333"/><path d="M1 10l2.5-1.5v3zM12 10l-2.5-1.5v3z" fill="#222"/></g><g transform="translate(225,57)"><rect x=".5" y=".5" width="12" height="12" fill="#bcd0e0" stroke="#3e5e7a"/><rect x="2.5" y="5" width="8" height="3" fill="#f0f4f8" stroke="#3e5e7a"/><rect x="1" y="10" width="11" height="2" fill="#3e5e7a"/></g><g transform="translate(244,57)"><rect x=".5" y="1.5" width="12" height="11" fill="#bcd0e0" stroke="#3e5e7a"/><rect x="2.5" y="5" width="8" height="3" fill="#f0f4f8" stroke="#3e5e7a"/><path d="M0 4h2M0 10h2M11 4h2M11 10h2" stroke="#3e5e7a"/></g><g transform="translate(263,57)"><rect x=".5" y=".5" width="12" height="12" fill="#bcd0e0" stroke="#3e5e7a"/><path d="M3 8l3-3h5l-3 3z" fill="#f0f4f8" stroke="#3e5e7a"/><rect x="1" y="10" width="11" height="2" fill="#3e5e7a"/></g><g transform="translate(281,57)"><path d="M1 3l5-2 6 2v6l-6 2-5-2z" fill="#a8bccc" stroke="#7a8e9e"/><path d="M3 11a4 2 0 0 0 7 0" fill="none" stroke="#5a7e9c" stroke-width="1.3"/></g><g transform="translate(307,56)"><rect x=".5" y=".5" width="13" height="13" fill="#bcd0e0" stroke="#3e5e7a"/><path d="M.5 4.5h13M.5 8.5h13M7 4.5v9" stroke="#3e5e7a"/><rect x="2" y="1.5" width="10" height="2" fill="#f0f4f8"/></g><g transform="translate(331,56)"><rect x=".5" y=".5" width="13" height="13" fill="#bcd0e0" stroke="#3e5e7a"/><path d="M.5 4.5h13M.5 8.5h13M7 4.5v9" stroke="#3e5e7a"/><rect x="2" y="1.5" width="10" height="2" fill="#f0f4f8"/></g><polygon points="206,62 212,62 209,65.5" fill="#000"/><rect x="1" y="79.5" width="19" height="18" fill="#f7f7f7"/><rect x="1" y="79.5" width="19" height="1" fill="#a8a8a8"/><rect x="1" y="79.5" width="1" height="18" fill="#a8a8a8"/><rect x="1" y="96.5" width="19" height="1" fill="#ffffff"/><rect x="19" y="79.5" width="1" height="18" fill="#ffffff"/><g transform="translate(4,83.5)"><path d="M11.5 .5L7.5 1.2L4 5.5H7.5L2.5 11.5M11.5 .5L8.8 4L11.8 3.8L3.5 12.5" fill="none" stroke="#111" stroke-width="1.2" stroke-linejoin="round"/><circle cx="2.8" cy="12" r="1.4" fill="none" stroke="#111" stroke-width="1.2"/></g><g transform="translate(4,107.5)"><rect x="5" y="5" width="2" height="2" fill="#111"/></g><g transform="translate(4,123.5)"><path d="M1 12l10-10" stroke="#222" stroke-width="1.4"/><circle cx="1.5" cy="11.5" r="1" fill="#222"/><circle cx="10.5" cy="2.5" r="1" fill="#222"/></g><g transform="translate(4,139.5)"><path d="M1.5 12a10 10 0 0 1 10-10" fill="none" stroke="#222" stroke-width="1.5"/></g><g transform="translate(4,157.0)"><circle cx="6" cy="6.5" r="5" fill="none" stroke="#222" stroke-width="1.5"/><path d="M6 6.5l3-3" stroke="#222" stroke-width="1.2"/></g><g transform="translate(4,175.5)"><path d="M0 8q3-6 6 0t6 0" fill="none" stroke="#222" stroke-width="1.5"/></g><g transform="translate(4,192.5)"><path d="M1 1q5 3 10 0q-3 5 0 10q-5-3-10 0q3-5 0-10z" fill="none" stroke="#222" stroke-width="1.4"/></g><g transform="translate(4,210.0)"><path d="M1.5 12a10 10 0 0 1 10-10M5 12a6 6 0 0 1 6-6" fill="none" stroke="#444" stroke-width="1.2"/></g><g transform="translate(4,233.5)"><rect x="1.75" y="3.25" width="10" height="7" fill="#fff" stroke="#222" stroke-width="1.5"/></g><g transform="translate(4,249.5)"><path d="M6.5 1.5l4.2 2.5v5.5l-4.2 2.5-4.2-2.5v-5.5z" fill="#fff" stroke="#222" stroke-width="1.3"/></g><g transform="translate(4,267.5)"><path d="M1 4.5l3-3h8v7l-3 3h-8z" fill="url(#g3d)"/><path d="M1 4.5h8v7h-8z" fill="url(#g3d)" stroke="#6a8090" stroke-width=".6"/><path d="M1 4.5l3-3h8l-3 3z" fill="#c8d8e0"/><path d="M9 4.5l3-3v7l-3 3z" fill="#5e7484"/></g><g transform="translate(4,284.5)"><rect x="1.5" y="2" width="10" height="10" fill="url(#g3d)"/><ellipse cx="6.5" cy="2.2" rx="5" ry="1.6" fill="#dce6ec" stroke="#6a8090" stroke-width=".7"/><path d="M1.5 12a5 1.6 0 0 0 10 0" fill="#7a909e"/></g><g transform="translate(4,300.5)"><path d="M6.5 .5l5.5 10.5a5.5 2 0 0 1-11 0z" fill="url(#g3d)"/><path d="M1 11a5.5 2 0 0 0 11 0" fill="none" stroke="#6a8090" stroke-width=".7"/></g><g transform="translate(4,319.5)"><circle cx="6.5" cy="6.5" r="5.8" fill="url(#r3d)"/></g><g transform="translate(4,336.5)"><ellipse cx="6.5" cy="7" rx="6" ry="4.8" fill="url(#r3d)"/><ellipse cx="6.8" cy="6.3" rx="2.4" ry="1.6" fill="#3e5666"/></g><g transform="translate(4,353.5)"><path d="M1.5 1.5h10v6.5q-.5 5-5 5t-5-5z" fill="url(#g3d)" stroke="#5a7080" stroke-width=".7"/><path d="M1.5 1.5h10" stroke="#dde8ee"/></g><g transform="translate(4,371.5)"><path d="M6.5 .5l6 8.5-6 4-6-4z" fill="#6a8494"/><path d="M6.5 .5l-6 8.5 6 4z" fill="#b4c6d0"/></g><g transform="translate(4,388.5)"><ellipse cx="6.5" cy="7" rx="6" ry="3.8" fill="url(#r3d)"/></g><g transform="translate(4,405.5)"><ellipse cx="6.5" cy="7.5" rx="6.5" ry="4" fill="#4e6a7e"/><ellipse cx="6.5" cy="6.2" rx="4.8" ry="2.2" fill="#a8bcc8"/></g><g transform="translate(4,429.5)"><path d="M1 1v12M12 1v12M1 6h11" stroke="#222" stroke-width="1.3"/><path d="M1 6l3-2v4zM12 6l-3-2v4z" fill="#222"/></g><g transform="translate(4,447.5)"><path d="M1 12h11M1 12l8-8" stroke="#222" stroke-width="1.3"/><path d="M5 12a4 4 0 0 0-1-3" fill="none" stroke="#222"/><path d="M9 4l3-2-1 3z" fill="#222"/></g><g transform="translate(4,463.5)"><circle cx="6.5" cy="6.5" r="5.5" fill="none" stroke="#222" stroke-width="1.3"/><path d="M2 2l9 9" stroke="#222" stroke-width="1.2"/></g><g transform="translate(4,480.5)"><circle cx="6.5" cy="6.5" r="5.5" fill="none" stroke="#222" stroke-width="1.3"/><path d="M3 3l7 7" stroke="#222" stroke-width="1.2"/><path d="M10 10l-1-3-2 2z" fill="#222"/></g><g transform="translate(4,504.5)"><path d="M1 1h11v3M1 1v3M6.5 1v11M4 12h5" fill="none" stroke="#111" stroke-width="2.2"/></g><g transform="translate(4,522.5)"><rect x="1.5" y="1.5" width="10" height="10" fill="none" stroke="#222"/><path d="M0 4h13M0 9h13M4 0v13M9 0v13M2 11l9-9M2 2l9 9" stroke="#333" stroke-width=".8"/></g><g transform="translate(24,82.5)"><path d="M1.5 1v11" stroke="#3a5a78" stroke-width="2.2"/><path d="M1 3h10M1 7h10" stroke="#5a84a8" stroke-width="2.4"/><path d="M9.5 1v11" stroke="#9abcd4" stroke-width="2"/></g><g transform="translate(24,99.5)"><path d="M1.5 1v11" stroke="#3a5a78" stroke-width="2.2"/><path d="M1 3h10M1 7h10" stroke="#5a84a8" stroke-width="2.4"/><path d="M9.5 1v5" stroke="#9abcd4" stroke-width="2"/><ellipse cx="7.5" cy="10" rx="4" ry="2.5" fill="#d8c8a8" stroke="#777" stroke-width=".6"/></g><g transform="translate(24,116.5)"><path d="M0 1.5h8l2.5 2.5-2.5 2.5h-8z" fill="#a4a4a4"/><path d="M1 7v5" stroke="#aaa" stroke-width="2"/><path d="M8 8.5l4 4M12 8.5l-4 4" stroke="#999"/></g><g transform="translate(24,133.5)"><path d="M0 1.5h8l2.5 2.5-2.5 2.5h-8z" fill="#a4a4a4"/><path d="M1 7v5" stroke="#aaa" stroke-width="2"/><path d="M8 8.5l4 4M12 8.5l-4 4" stroke="#999"/></g><g transform="translate(24,149.5)"><path d="M1.5 1v11" stroke="#3a5a78" stroke-width="2.2"/><path d="M1 3h10M1 7h10" stroke="#5a84a8" stroke-width="2.4"/><path d="M9.5 1v4" stroke="#9abcd4" stroke-width="2"/><path d="M5 9h4v-2.5l4 3.5-4 3.5v-2.5h-4z" fill="#111"/></g><g transform="translate(24,167.5)"><path d="M1.5 1v11" stroke="#3a5a78" stroke-width="2.2"/><path d="M1 3h10M1 7h10" stroke="#5a84a8" stroke-width="2.4"/><path d="M9.5 1v4" stroke="#9abcd4" stroke-width="2"/><path d="M6 13V8.5h4l2 2V13" fill="#fff" stroke="#222" stroke-width="1.2"/></g><g transform="translate(24,189.5)"><path d="M1.5 1v11" stroke="#3a5a78" stroke-width="2.2"/><path d="M1 3h10M1 7h10" stroke="#5a84a8" stroke-width="2.4"/><path d="M9.5 1v4" stroke="#9abcd4" stroke-width="2"/><path d="M5 8h4a2.5 2.5 0 0 1 0 5H6" fill="none" stroke="#222" stroke-width="1.3"/><path d="M7 11l-2.5 2 2.5 2z" fill="#222"/></g><g transform="translate(24,218.5)"><path d="M.5 2l10 4" stroke="#1c4a78" stroke-width="4.5"/><path d="M1 2.2l9 3.6" stroke="#d8e8f4" stroke-width="1.1" stroke-dasharray="1.8,1.6"/><rect x="9" y="0" width="4" height="10" fill="#e4eef6" opacity=".6"/></g><g transform="translate(24,234.5)"><path d="M.5 2l10 4" stroke="#1c4a78" stroke-width="4.5"/><path d="M1 2.2l9 3.6" stroke="#d8e8f4" stroke-width="1.1" stroke-dasharray="1.8,1.6"/><path d="M6 8l5 4" stroke="#a89070" stroke-width="3"/><path d="M6 8l5 4" stroke="#f0e8d8" stroke-width="1"/></g><g transform="translate(24,251.5)"><path d="M0 1.5h8l2.5 2.5-2.5 2.5h-8z" fill="#a4a4a4"/><path d="M8 8.5l4 4M12 8.5l-4 4" stroke="#999"/></g><g transform="translate(24,268.5)"><path d="M0 1.5h8l2.5 2.5-2.5 2.5h-8z" fill="#a4a4a4"/><path d="M8 8.5l4 4M12 8.5l-4 4" stroke="#999"/></g><g transform="translate(24,285.5)"><path d="M.5 2l10 4" stroke="#1c4a78" stroke-width="4.5"/><path d="M1 2.2l9 3.6" stroke="#d8e8f4" stroke-width="1.1" stroke-dasharray="1.8,1.6"/><path d="M6 9h3v-2.5l4 3.5-4 3.5v-2.5h-3z" fill="#111"/></g><g transform="translate(24,302.5)"><path d="M.5 2l10 4" stroke="#1c4a78" stroke-width="4.5"/><path d="M1 2.2l9 3.6" stroke="#d8e8f4" stroke-width="1.1" stroke-dasharray="1.8,1.6"/><path d="M6 13V8.5h4l2 2V13" fill="#fff" stroke="#222" stroke-width="1.2"/></g><g transform="translate(24,325.5)"><path d="M.5 2l10 4" stroke="#1c4a78" stroke-width="4.5"/><path d="M1 2.2l9 3.6" stroke="#d8e8f4" stroke-width="1.1" stroke-dasharray="1.8,1.6"/><path d="M5 8h4a2.5 2.5 0 0 1 0 5H6" fill="none" stroke="#222" stroke-width="1.3"/></g><g transform="translate(24,353.5)"><path d="M1 7l4-4h8v4z" fill="#eee" stroke="#bbb" stroke-width=".5"/><path d="M1 7h12v3h-12z" fill="#222"/><path d="M1 7l4-4h4l-4 4z" fill="#555"/></g><g transform="translate(24,370.5)"><rect x="4" y="2" width="4" height="11" fill="#222"/><path d="M8 2l3-2v10l-3 3z" fill="#888"/><path d="M1 4h11" stroke="#ccc"/></g><g transform="translate(24,388.5)"><rect x="3" y="1" width="4" height="12" fill="#222"/><path d="M7 2h5v4" fill="none" stroke="#ccc"/></g><g transform="translate(24,405.5)"><rect x="2" y="6" width="4" height="7" fill="#333"/><path d="M2 1h10v4h-10" fill="none" stroke="#bbb"/></g><g transform="translate(24,423.5)"><path d="M2 11l4-4v6z" fill="#555"/><path d="M6 3l5-3v10l-5 3z" fill="#aaa"/><path d="M3 8h3v5h-3z" fill="#222"/></g><g transform="translate(24,440.5)"><path d="M1 1l12 12h-12z" fill="#3a78a8"/><path d="M1 1l12 12h-6z" fill="#8ab8dc"/></g><g transform="translate(24,463.5)"><rect x="1.5" y="1.5" width="11" height="11" fill="#fff" stroke="#444"/><path d="M1.5 4h11" stroke="#444"/><path d="M7 11v-5M5 8l2-2 2 2" fill="none" stroke="#111" stroke-width="1.3"/></g><g transform="translate(24,481.5)"><rect x="1.5" y="1.5" width="11" height="11" fill="#fff" stroke="#444"/><path d="M4 2v10" stroke="#444"/><path d="M11 7h-5M8 5l-2 2 2 2" fill="none" stroke="#111" stroke-width="1.3"/></g><g transform="translate(24,499.5)"><rect x="1.5" y="1.5" width="11" height="11" fill="#fff" stroke="#444"/><path d="M1.5 10h11" stroke="#444"/><path d="M7 9v-5M5 6l2-2 2 2" fill="none" stroke="#111" stroke-width="1.3"/></g><g transform="translate(24,522.5)"><path d="M1 12q2-10 12-11q-3 9-12 11z" fill="#98b4c8"/><path d="M1 12q4-3 10-9" fill="none" stroke="#d8e8f0"/></g><g transform="translate(24,540.5)"><path d="M3 1v9h9" fill="none" stroke="#333" stroke-width="1.2"/><rect x="5" y="3" width="7" height="9" fill="#fff" stroke="#333"/></g><g transform="translate(24,564.5)"><rect x="2" y="1.5" width="9" height="11" fill="#fff" stroke="#556"/><path d="M6.5 12v-5M4.5 2v3l2 2 2-2v-3" fill="none" stroke="#111" stroke-width="1.5"/></g><g transform="translate(24,581.5)"><rect x="3.5" y="1.5" width="9" height="9" fill="#fff" stroke="#555"/><path d="M1 12h4M3 10v4" stroke="#111" stroke-width="1.5"/></g><g transform="translate(24,605.5)"><path d="M2 1v12" stroke="#222" stroke-width="1.3"/><path d="M4 3h8M4 6h5M4 9h8M4 12h6" stroke="#556" stroke-width="1.2"/></g><g transform="translate(59,82.5)"><path d="M.5 12.5v-12h11v6h-5v6z" fill="none" stroke="#777" stroke-width="1.2"/></g><g transform="translate(59,99.5)"><path d="M.5 12.5v-12h9v4h-4v8z" fill="none" stroke="#777" stroke-width="1.2"/><path d="M10.5 13v-5M8.5 4v3l2 2 2-2v-3" fill="none" stroke="#111" stroke-width="1.6"/></g><g transform="translate(59,123.5)"><path d="M1 10l9-8 3 3-9 8z" fill="#8aaec8"/><path d="M1 10l9-8 1 1-9 8z" fill="#c8dcea"/><circle cx="2" cy="11" r="2" fill="#1a2a3a"/></g><g transform="translate(59,140.5)"><path d="M2 4h7l3-3v9l-3 3h-7z" fill="#6a90b0"/><rect x="2" y="6" width="3" height="7" fill="#1a3048"/></g><g transform="translate(59,157.5)"><rect x="2" y="2" width="9" height="11" fill="#5c84a8"/><rect x="2" y="3" width="3" height="10" fill="#142a40"/><path d="M11 2l2-2v11l-2 2" fill="#8ab0cc"/></g><g transform="translate(59,175.5)"><path d="M1 9l9-8 2 2-9 8zM1 13l9-8 2 2-9 8z" fill="#7aa0c0"/></g><g transform="translate(59,191.5)"><path d="M0 6l4-4h9v3h-6l-3 4v4h-4z" fill="#7aa0c0"/><path d="M0 6l4-4h9v1h-9l-4 4z" fill="#c8dcea"/></g><g transform="translate(59,215.5)"><path d="M1.5 12.5v-11h6M1.5 12.5h6" fill="none" stroke="#888" stroke-dasharray="2,1"/><path d="M10.5 13v-5M8.5 2v3l2 2 2-2v-3" fill="none" stroke="#111" stroke-width="1.6"/></g><g transform="translate(59,233.5)"><path d="M.5 1.5h6v4" fill="none" stroke="#556"/><path d="M1 12l5-5M1 12v-3M1 12h3" stroke="#111" stroke-width="1.4" fill="none"/><path d="M10.5 13v-5M8.5 2v3l2 2 2-2v-3" fill="none" stroke="#111" stroke-width="1.6"/></g><g transform="translate(59,249.5)"><path d="M.5 1.5h8l3 3" fill="none" stroke="#999"/><path d="M1 3h7l4 3-3 1" fill="#c8d8e8"/><path d="M4 8h5a2.5 2.5 0 0 1 0 5h-3" fill="none" stroke="#111" stroke-width="1.3"/></g><g transform="translate(59,273.5)"><rect x="1.5" y="2.5" width="10" height="10" fill="#fff" stroke="#556"/><path d="M1.5 6h10M1.5 9h10M5 2.5v10M8 2.5v10" stroke="#6a8aa8"/><path d="M8 9l5-9" stroke="#d0a020" stroke-width="2"/></g><g transform="translate(59,300.5)"><rect x=".5" y=".5" width="12" height="12" fill="#fff" stroke="#556"/><rect x="2.5" y="2.5" width="8" height="8" fill="#f0f0f0" stroke="#889" stroke-dasharray="1,1"/><circle cx="3" cy="3" r="1" fill="#111"/><circle cx="10" cy="10" r="1" fill="#111"/><circle cx="10" cy="3" r="1" fill="#111"/><circle cx="3" cy="10" r="1" fill="#111"/></g><g transform="translate(59,317.5)"><rect x=".5" y=".5" width="12" height="12" fill="#fff" stroke="#556"/><rect x="5" y="5.5" width="2.5" height="2.5" fill="#111"/></g><g transform="translate(59,344.5)"><rect x=".5" y="1.5" width="11" height="10" fill="#fff" stroke="#556"/><rect x="2.5" y="3.5" width="7" height="6" fill="#eef" stroke="#889"/><path d="M9 11h4M11 9v4" stroke="#111" stroke-width="1.5"/></g><g transform="translate(59,362.5)"><path d="M0 4h13M0 8h13" stroke="#778"/><path d="M5 0v13" stroke="#556" stroke-width="1.5"/><path d="M7 10h4a2 2 0 0 0 0-4" fill="none" stroke="#111" stroke-width="1.3"/></g><g transform="translate(59,379.5)"><rect x="1.5" y="1.5" width="10" height="10" fill="#fff" stroke="#556"/><circle cx="10" cy="4" r="3" fill="#e04040"/><path d="M1 12l5-5" stroke="#111" stroke-width="1.6"/></g><g transform="translate(59,396.5)"><rect x=".5" y="1.5" width="11" height="10" fill="#fff" stroke="#556"/><rect x="2.5" y="3.5" width="7" height="6" fill="#eef" stroke="#889"/><path d="M6 9h5v-2l3 3-3 3v-2h-5z" fill="#111"/></g><g transform="translate(59,413.5)"><rect x=".5" y="1.5" width="11" height="10" fill="#fff" stroke="#556"/><rect x="2.5" y="3.5" width="7" height="6" fill="#eef" stroke="#889"/><path d="M9 13v-6M7 9l2-2 2 2" fill="none" stroke="#111" stroke-width="1.2"/></g><g transform="translate(59,431.5)"><rect x=".5" y="1.5" width="11" height="10" fill="#fff" stroke="#b99"/><rect x="2.5" y="3.5" width="7" height="6" fill="#fee" stroke="#c99"/><circle cx="10" cy="10" r="2.5" fill="#e04040"/></g><g transform="translate(59,448.5)"><rect x=".5" y="1.5" width="11" height="10" fill="#fff" stroke="#556"/><rect x="2.5" y="3.5" width="7" height="6" fill="#eef" stroke="#889"/><circle cx="9.5" cy="9" r="3" fill="#222"/><path d="M9.5 6a3 3 0 0 1 0 6z" fill="#fff"/></g><g transform="translate(59,463.5)"><rect x=".5" y=".5" width="12" height="12" fill="#d8e4f0" stroke="#556"/><path d="M1 6.5h4M12 6.5h-4" stroke="#1a3a6a" stroke-width="1.5"/><path d="M6 6.5l-3-2.5v5zM7 6.5l3-2.5v5z" fill="#1a3a6a"/></g><g transform="translate(59,489.5)"><path d="M1 3h11M1 10h11" stroke="#8aa"/><path d="M6 6.5l-4-3v6zM7 6.5l4-3v6z" fill="#1a3a6a"/></g><g transform="translate(59,504.5)"><rect x="3.5" y="1.5" width="9" height="9" fill="#fff" stroke="#556"/><path d="M1 12l6-6M3 6h4v4" fill="none" stroke="#111" stroke-width="1.5"/></g><polygon points="43,446 49,446 46,449.5" fill="#000"/><polygon points="43,528 49,528 46,531.5" fill="#000"/><polygon points="43,546 49,546 46,549.5" fill="#000"/><polygon points="43,587 49,587 46,590.5" fill="#000"/><rect x="45" y="163" width="1" height="18" fill="#c8c8c8"/><rect x="45" y="298" width="1" height="18" fill="#c8c8c8"/><rect x="45" y="498" width="1" height="16" fill="#c8c8c8"/><g transform="translate(974,82.25)"><path d="M1 11l2-2h6l-2 2zM2 8l2-2h6l-2 2zM3 5l2-2h6l-2 2zM4 2l2-2h5l-2 2z" fill="#7aa4c4" stroke="#1e3a58" stroke-width=".9"/><path d="M1 11l3-9" stroke="#111" stroke-width="1.4"/></g><g transform="translate(974,101.0)"><path d="M1 1v12M1 6l4 6 7-5" fill="none" stroke="#333" stroke-width="1.3"/></g><g transform="translate(974,126.0)"><path d="M1 10l4-6h7l-2 6z" fill="#5a84a8"/><path d="M3 8h6" stroke="#fff"/><path d="M9 9h2v-2l2.5 3-2.5 3v-2h-2z" fill="#111"/></g><g transform="translate(974,151.0)"><ellipse cx="6.5" cy="5" rx="5.5" ry="3" fill="#e0e8f0" stroke="#a8b8c8"/><ellipse cx="6.5" cy="5" rx="2" ry="1" fill="#b8c8d8"/><path d="M2 9h9" stroke="#ccc"/></g><g transform="translate(974,167.5)"><rect x=".5" y="1.5" width="10" height="9" fill="#d0dce8" stroke="#889"/><circle cx="5" cy="6" r="3" fill="#fff" stroke="#778"/><path d="M8 11h3v-2l2.5 2.5-2.5 2.5v-2h-3z" fill="#111"/></g><g transform="translate(974,184.5)"><path d="M1 3q5.5 5 11 0v3q-5.5 5-11 0z" fill="#4a7498" stroke="#1a3048" stroke-width=".8"/></g><g transform="translate(974,201.0)"><path d="M1 1q5.5 5 11 0v2.5q-5.5 5-11 0z" fill="#4a7498" stroke="#1a3048" stroke-width=".8"/><path d="M8 10h3v-2l2.5 2.5-2.5 2.5v-2h-3z" fill="#111"/></g><g transform="translate(974,219.5)"><rect x="3" y=".5" width="7" height="2" fill="#2a4a68"/><rect x="4" y="2" width="5" height="9" fill="#6a90b0"/><rect x="3" y="10.5" width="7" height="2" fill="#2a4a68"/><rect x="5" y="3" width="2" height="7" fill="#c8dcec"/></g><g transform="translate(974,237.5)"><rect x="2" y=".5" width="7" height="2" fill="#2a4a68"/><rect x="3" y="2" width="5" height="10" fill="#6a90b0"/><rect x="2" y="11" width="7" height="2" fill="#2a4a68"/><path d="M8 10h3v-2l2.5 2.5-2.5 2.5v-2h-3z" fill="#111"/></g><g transform="translate(974,263.5)"><path d="M1.5 3v6M11.5 3v6M1.5 6h10" stroke="#445" stroke-width="1.8"/></g><g transform="translate(974,280.2)"><path d="M1 2.5h11M1 10h11M2.5 2.5l1.5 3.5-1.5 4M10.5 2.5l-1.5 3.5 1.5 4" fill="none" stroke="#334" stroke-width="1.5"/></g><g transform="translate(974,307.25)"><path d="M10.5 1.5l2-1.5v11l-2 2z" fill="#c8d0d8" stroke="#556"/><rect x="2.5" y="1.5" width="8" height="11" fill="#e8eef4" stroke="#334"/><path d="M6.5 2v10" stroke="#778"/><path d="M1 8h5M3 6l-2 2 2 2" fill="none" stroke="#111" stroke-width="1.6"/></g><g transform="translate(974,323.5)"><path d="M10.5 1.5l2-1.5v11l-2 2z" fill="#c8d0d8" stroke="#556"/><rect x="2.5" y="1.5" width="8" height="11" fill="#e8eef4" stroke="#334"/><path d="M6.5 2v10" stroke="#778"/><path d="M4.5 13V8M2.5 2v3l2 2 2-2V2" fill="none" stroke="#111" stroke-width="1.6"/></g><g transform="translate(974,340.5)"><path d="M10.5 1.5l2-1.5v11l-2 2z" fill="#c8d0d8" stroke="#556"/><rect x="2.5" y="1.5" width="8" height="11" fill="#e8eef4" stroke="#334"/><path d="M6.5 2v10" stroke="#778"/><path d="M1 6h5M3 4l-2 2 2 2" fill="none" stroke="#111" stroke-width="1.6"/></g><g transform="translate(974,357.25)"><path d="M10.5 1.5l2-1.5v11l-2 2z" fill="#c8d0d8" stroke="#556"/><rect x="2.5" y="1.5" width="8" height="11" fill="#e8eef4" stroke="#334"/><path d="M6.5 2v10" stroke="#778"/><path d="M3 8h5M6 6l2 2-2 2" fill="none" stroke="#111" stroke-width="1.6"/></g><g transform="translate(974,386.0)"><rect x=".5" y=".5" width="12" height="12" fill="#d8e4ee" stroke="#5a7890"/><path d="M6.5 1v12" stroke="#5a7890"/><path d="M5 6.5l-2-1.5v3zM8 6.5l2-1.5v3z" fill="#111"/></g><g transform="translate(974,403.5)"><rect x=".5" y=".5" width="12" height="12" fill="#e8eef4" stroke="#a8b8c8"/><path d="M6.5 1v12" stroke="#a8b8c8"/><path d="M5 6.5l-2-1.5v3zM8 6.5l2-1.5v3z" fill="#889"/></g><g transform="translate(974,420.2)"><rect x="5.5" y=".5" width="7" height="12" fill="#c8dcec" stroke="#a8b8c8"/><path d="M2 6.5h3" stroke="#111" stroke-width="1.3"/></g><g transform="translate(974,438.5)"><rect x="1.5" y=".5" width="6" height="12" fill="#c8dcec" stroke="#335"/><path d="M4 1v11" stroke="#335"/><path d="M10.5 13v-5M8.5 2v3l2 2 2-2v-3" fill="none" stroke="#111" stroke-width="1.6"/></g><g transform="translate(974,461.5)"><rect x=".5" y=".5" width="12" height="12" fill="#fff" stroke="#335" stroke-width="1.2"/><path d="M6.5 1v12" stroke="#335"/><path d="M3 5v3M10 5v3" stroke="#111" stroke-width="1.3"/></g><g transform="translate(974,486.0)"><rect x="2.5" y=".5" width="9" height="12" fill="#a8c8e8" stroke="#4a6a88"/><path d="M5 1v12M9 1v12M3 4h8M3 7h8M3 10h8" stroke="#e8f0f8" stroke-width=".8"/><path d="M1 12h3" stroke="#c8a020" stroke-width="1.5"/></g><g transform="translate(974,511.0)"><path d="M1 5l3-3h8l-3 3z" fill="#fff" stroke="#333"/><rect x="1" y="5" width="8" height="7" fill="#fff" stroke="#333"/><path d="M12 2v7l-3 3" fill="none" stroke="#333"/><rect x="3" y="7" width="4" height="1.5" fill="#333"/></g><g transform="translate(974,529.5)"><path d="M1 6l3-3h8l-3 3z" fill="#fff" stroke="#333"/><rect x="1" y="6" width="8" height="6" fill="#fff" stroke="#333"/><path d="M12 3v6l-3 3" fill="none" stroke="#333"/><path d="M3 9h4" stroke="#333"/></g><g transform="translate(974,552.5)"><path d="M4 12v-9M1 6l3-4 3 4" fill="none" stroke="#111" stroke-width="1.6"/><path d="M8 2h4M8 2v10h4M8 7h4" fill="none" stroke="#335"/></g><g transform="translate(974,570.2)"><path d="M1 7l3-3h5l-3 3z" fill="#fff" stroke="#333"/><rect x="1" y="7" width="6" height="5" fill="#fff" stroke="#333"/><path d="M10.5 13v-5M8.5 1v3l2 2 2-2v-3" fill="none" stroke="#111" stroke-width="1.6"/></g><rect x="1079" y="1" width="13" height="13" fill="#e4ecf4"/><rect x="1079" y="13" width="13" height="1" fill="#707070"/><rect x="1091" y="1" width="1" height="13" fill="#707070"/><rect x="1079" y="1" width="12" height="1" fill="#ffffff"/><rect x="1079" y="1" width="1" height="12" fill="#ffffff"/><rect x="1093" y="1" width="13" height="13" fill="#e4ecf4"/><rect x="1093" y="13" width="13" height="1" fill="#707070"/><rect x="1105" y="1" width="1" height="13" fill="#707070"/><rect x="1093" y="1" width="12" height="1" fill="#ffffff"/><rect x="1093" y="1" width="1" height="12" fill="#ffffff"/><rect x="1107" y="1" width="13" height="13" fill="#e4ecf4"/><rect x="1107" y="13" width="13" height="1" fill="#707070"/><rect x="1119" y="1" width="1" height="13" fill="#707070"/><rect x="1107" y="1" width="12" height="1" fill="#ffffff"/><rect x="1107" y="1" width="1" height="12" fill="#ffffff"/><rect x="1121" y="1" width="14" height="13" fill="#e4ecf4"/><rect x="1121" y="13" width="14" height="1" fill="#707070"/><rect x="1134" y="1" width="1" height="13" fill="#707070"/><rect x="1121" y="1" width="13" height="1" fill="#ffffff"/><rect x="1121" y="1" width="1" height="12" fill="#ffffff"/><path d="M1081 7h2M1083 4v6l4-2 4 2v-6l-4 2z" fill="#d8e0c8" stroke="#111" stroke-width="1.2"/><rect x="1095" y="3" width="7" height="5" fill="#2a4ab0"/><path d="M1099 11h5" stroke="#555" stroke-dasharray="1,1"/><rect x="1109" y="3" width="8" height="9" fill="#60b0e0"/><rect x="1110" y="4" width="6" height="7" fill="#e0a040"/><rect x="1111" y="5" width="4" height="4" fill="#c03050"/><path d="M1125 8l3-3 3 3M1125 11l3-3 3 3" fill="none" stroke="#3050a0"/><rect x="1138" y="0" width="14" height="14" fill="#eeeeee"/><rect x="1138" y="13" width="14" height="1" fill="#707070"/><rect x="1151" y="0" width="1" height="14" fill="#707070"/><rect x="1138" y="0" width="13" height="1" fill="#ffffff"/><rect x="1138" y="0" width="1" height="13" fill="#ffffff"/><rect x="1153" y="0" width="14" height="14" fill="#eeeeee"/><rect x="1153" y="13" width="14" height="1" fill="#707070"/><rect x="1166" y="0" width="1" height="14" fill="#707070"/><rect x="1153" y="0" width="13" height="1" fill="#ffffff"/><rect x="1153" y="0" width="1" height="13" fill="#ffffff"/><rect x="1168" y="0" width="14" height="14" fill="#eeeeee"/><rect x="1168" y="13" width="14" height="1" fill="#707070"/><rect x="1181" y="0" width="1" height="14" fill="#707070"/><rect x="1168" y="0" width="13" height="1" fill="#ffffff"/><rect x="1168" y="0" width="1" height="13" fill="#ffffff"/><rect x="1142" y="9" width="6" height="2" fill="#111"/><rect x="1157.5" y="5.5" width="6" height="5" fill="none" stroke="#111" stroke-width="1.2"/><path d="M1159.5 3.5h6v5" fill="none" stroke="#111" stroke-width="1.2"/><path d="M1171.5 3.5l7 7M1178.5 3.5l-7 7" stroke="#111" stroke-width="2"/><rect x="1138" y="17" width="14" height="14" fill="#eeeeee"/><rect x="1138" y="30" width="14" height="1" fill="#707070"/><rect x="1151" y="17" width="1" height="14" fill="#707070"/><rect x="1138" y="17" width="13" height="1" fill="#ffffff"/><rect x="1138" y="17" width="1" height="13" fill="#ffffff"/><rect x="1153" y="17" width="14" height="14" fill="#eeeeee"/><rect x="1153" y="30" width="14" height="1" fill="#707070"/><rect x="1166" y="17" width="1" height="14" fill="#707070"/><rect x="1153" y="17" width="13" height="1" fill="#ffffff"/><rect x="1153" y="17" width="1" height="13" fill="#ffffff"/><rect x="1168" y="17" width="14" height="14" fill="#eeeeee"/><rect x="1168" y="30" width="14" height="1" fill="#707070"/><rect x="1181" y="17" width="1" height="14" fill="#707070"/><rect x="1168" y="17" width="13" height="1" fill="#ffffff"/><rect x="1168" y="17" width="1" height="13" fill="#ffffff"/><rect x="1142" y="26" width="6" height="2" fill="#111"/><rect x="1157.5" y="22.5" width="6" height="5" fill="none" stroke="#111" stroke-width="1.2"/><path d="M1159.5 20.5h6v5" fill="none" stroke="#111" stroke-width="1.2"/><path d="M1171.5 20.5l7 7M1178.5 20.5l-7 7" stroke="#b0b0b0" stroke-width="1.3"/><rect x="2" y="1" width="13" height="13" fill="#1a5cb4"/><rect x="3.5" y="2.5" width="10" height="10" fill="#4a90d8"/><path d="M5 5h3v2.5h-3v2.5h3M9.5 5h3M9.5 5v2.5h3v2.5h-3" fill="none" stroke="#c8f0ff" stroke-width="1.2"/><rect x="4" y="18" width="4" height="4" fill="#d81818"/><path d="M6 21h5l1 2-2 2h-4z" fill="#20d020"/><path d="M4.5 26.5h12.5" stroke="#202040" stroke-width="1"/><path d="M8 31l7-11" stroke="#5030a0" stroke-width="1"/></svg>
<div class="t" style="left:17px;top:1.5px;font-size:10px;color:#142238">Mebel - [C:\Users\HP\Desktop\proj\pp.k3 *]</div>
<div class="t" style="left:23px;top:18px;font-size:10px"><u>Ф</u>айлы</div>
<div class="t" style="left:66px;top:18px;font-size:10px"><u>Р</u>едактировать</div>
<div class="t" style="left:143px;top:18px;font-size:10px"><u>В</u>ид</div>
<div class="t" style="left:171px;top:18px;font-size:10px">О<u>б</u>ъекты</div>
<div class="t" style="left:223px;top:18px;font-size:10px"><u>У</u>становки</div>
<div class="t" style="left:281px;top:18px;font-size:10px"><u>И</u>нструменты</div>
<div class="t" style="left:355px;top:18px;font-size:10px"><u>М</u>ебель</div>
<div class="t" style="left:402px;top:18px;font-size:10px">Проектирование</div>
<div class="t" style="left:490px;top:18px;font-size:10px">Расчет и чертежи</div>
<div class="t" style="left:581px;top:18px;font-size:10px"><u>З</u>аказ</div>
<div class="t" style="left:617px;top:18px;font-size:10px"><u>С</u>ервис</div>
<div class="t" style="left:662px;top:18px;font-size:10px"><u>О</u>кна</div>
<div class="t" style="left:697px;top:18px;font-size:10px">Справка</div>
<div class="t" style="left:1000px;top:85px;font-size:10.2px;font-weight:bold;">Мебель</div>
<div class="t" style="left:1000px;top:99px;font-size:10.2px;">Проектирование</div>
<div class="t" style="left:1000px;top:113px;font-size:10.2px;">Расчет и чертежи</div>
<div class="t" style="left:1000px;top:127px;font-size:10.2px;">Заказ</div>
<div class="t" style="left:1000px;top:141px;font-size:10.2px;">Сервис</div>
<div class="t" style="left:1000px;top:155px;font-size:10.2px;">Справочники</div>
<div class="t" style="left:1000px;top:169px;font-size:10.2px;">КЗ</div>
<div class="t" style="left:1012px;top:197px;font-size:10.2px;">Комната</div>
<div class="t" style="left:1012px;top:211px;font-size:10.2px;font-weight:bold;">Изделия</div>
<div class="t" style="left:1012px;top:225px;font-size:10.2px;">Длинномеры</div>
<div class="t" style="left:1012px;top:239px;font-size:10.2px;">Свет</div>
<div class="t" style="left:1000px;top:266.5px;font-size:10.2px;">Добавить</div>
<div class="t" style="left:1000px;top:280.5px;font-size:10.2px;">Копировать</div>
<div class="t" style="left:1000px;top:294.5px;font-size:10.2px;">Передвинуть</div>
<div class="t" style="left:1000px;top:308.5px;font-size:10.2px;">Групповой сдвиг</div>
<div class="t" style="left:1000px;top:322.5px;font-size:10.2px;">Заменить</div>
<div class="t" style="left:1000px;top:336px;font-size:10.2px;">Редактировать</div>
<div class="t" style="left:1000px;top:350px;font-size:10.2px;">Удалить</div>
<div class="t" style="left:1000px;top:673px;font-size:10.2px;font-weight:bold;">Целиком</div>
<div class="t" style="left:1000px;top:687px;font-size:10.2px;">Частично</div>
<div class="t" style="left:1000px;top:701px;font-size:10.2px;">Дополнительно</div>
<svg class="a" style="left:0;top:0" width="1184" height="720"><polygon points="1177,88.5 1181,92 1177,95.5" fill="#000"/><polygon points="1177,102.5 1181,106 1177,109.5" fill="#000"/><polygon points="1177,116.5 1181,120 1177,123.5" fill="#000"/><polygon points="1177,130.5 1181,134 1177,137.5" fill="#000"/><polygon points="1177,144.5 1181,148 1177,151.5" fill="#000"/><polygon points="1177,158.5 1181,162 1177,165.5" fill="#000"/><polygon points="1177,172.5 1181,176 1177,179.5" fill="#000"/><polygon points="1177,200.5 1181,204 1177,207.5" fill="#000"/><polygon points="1177,214.5 1181,218 1177,221.5" fill="#000"/><polygon points="1177,228.5 1181,232 1177,235.5" fill="#000"/><polygon points="1177,242.5 1181,246 1177,249.5" fill="#000"/><polygon points="1177,704.5 1181,708 1177,711.5" fill="#000"/></svg>
<div class="t" style="left:17px;top:658px;font-size:9.8px;color:#222">ПСК</div>
<div class="t" style="left:44px;top:658px;font-size:10.5px;color:#222">1</div>
<div class="t" style="left:57px;top:657px;font-size:10.7px"><span style="color:#2c3c9c">Команда:</span><span style="color:#6a2a7a">'RendMode,,2</span></div>
<div class="t" style="left:57px;top:670.5px;font-size:10.7px"><span style="color:#2c3c9c">Команда:</span><span style="color:#6a2a7a">;macro GetProtoMac("Shkaf.ptl")+"doors63.zmc|ScrFlatDel63.mac";</span></div>
<div class="t" style="left:57px;top:684px;font-size:10.7px"><span style="color:#2c3c9c">Укажите Объект-Источник:</span></div>
<div class="t" style="left:665px;top:701.5px;font-size:10px">0.0c</div>
<div class="t" style="left:801px;top:701.5px;font-size:10px">1:1</div>
<div class="t" style="left:835px;top:701.5px;font-size:10px">1:1</div>
<div class="t" style="left:869px;top:701.5px;font-size:10px">0</div>
<div class="t" style="left:888px;top:701.5px;font-size:10px">0</div>
</body></html>
